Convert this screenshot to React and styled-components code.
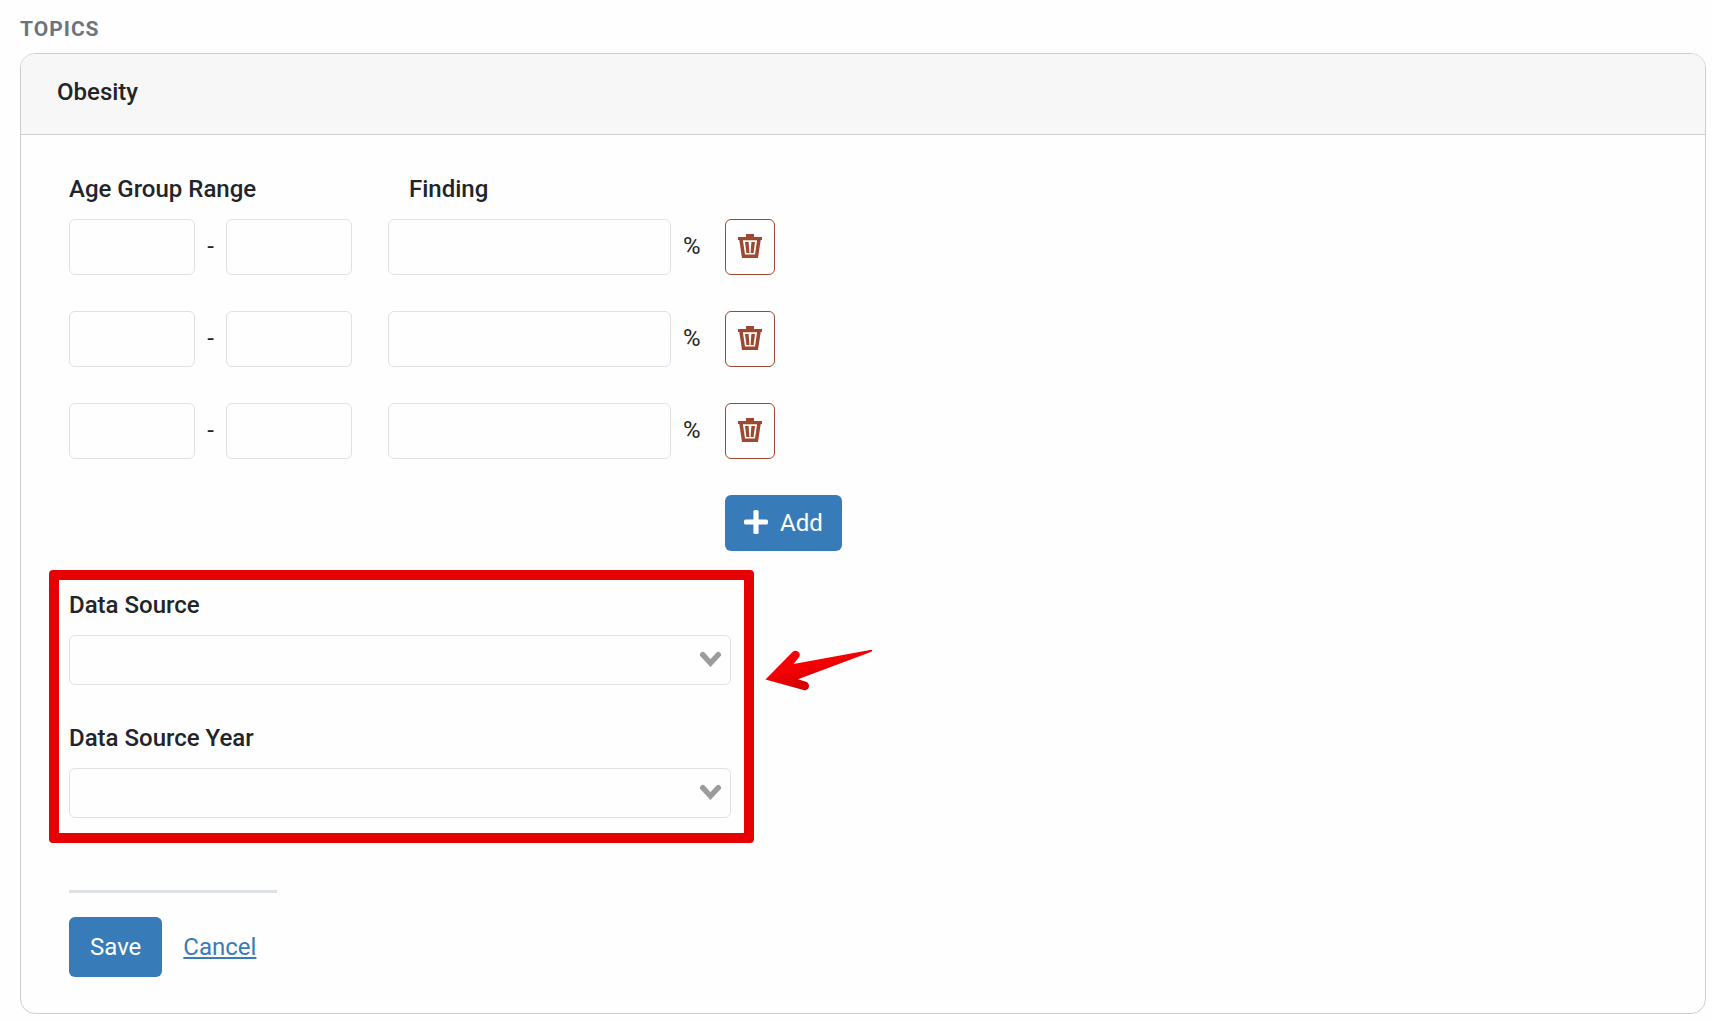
import React, { useState } from 'react';
import styled, { createGlobalStyle } from 'styled-components';

const GlobalStyle = createGlobalStyle`
    * {
        box-sizing: border-box;
    }
    body {
        margin: 0;
        background: #fefefe;
        color: #212529;
        font-family: Roboto, "Liberation Sans", sans-serif;
        font-size: 24px;
        line-height: 32px;
    }
    input, select, button {
        font: inherit;
    }
`

const Page = styled.main`
    padding: 16px 6px 6px 20px;
`

const Title = styled.h1`
    margin: 0 0 11px;
    color: #6c757d;
    font-size: 21px;
    font-weight: 700;
    line-height: 26px;
    letter-spacing: 1px;
    text-transform: uppercase;
`

const Card = styled.section`
    border: 1px solid #cccdce;
    border-radius: 15px;
    overflow: hidden;
`

const CardHeader = styled.header`
    padding: 22px 36px 26px;
    background: #f7f7f7;
    border-bottom: 1px solid #cccdce;
`

const CardTitle = styled.h2`
    margin: 0;
    font-size: 24px;
    font-weight: 500;
`

const CardBody = styled.form`
    padding: 38px 48px 36px;
`

const Findings = styled.div`
    display: grid;
    grid-template-columns: 126px 31px 126px 36px minmax(80px, 283px) 54px auto;
    justify-content: start;
    align-items: center;
    row-gap: 36px;
`

const Heading = styled.div`
    grid-column: ${({ $column }) => $column};
    margin-bottom: -22px;
    padding-left: ${({ $indent }) => ($indent ? '21px' : '0')};
    font-weight: 500;
`

const Input = styled.input`
    grid-column: ${({ $column }) => $column};
    width: 100%;
    height: 56px;
    padding: 0 12px;
    background: #fefefe;
    border: 1px solid #dee2e6;
    border-radius: 6px;
`

const Dash = styled.span`
    padding-bottom: 2px;
    text-align: center;
`

const Percent = styled.span`
    padding: 0 0 2px 12px;
`

const Button = styled.button`
    display: inline-flex;
    align-items: center;
    justify-content: center;
    gap: 12px;
    height: ${({ $tall }) => ($tall ? '60px' : '56px')};
    padding: 0 ${({ $tall }) => ($tall ? '21px' : '19px')};
    background: #387bb9;
    color: #fff;
    border: 0;
    border-radius: 6px;
    cursor: pointer;
`

const AddButton = styled(Button)`
    grid-column: 7;
`

const DeleteButton = styled.button`
    display: flex;
    align-items: center;
    justify-content: center;
    width: 50px;
    height: 56px;
    padding: 0 0 2px;
    background: #fefefe;
    color: #9d482f;
    border: 1px solid #9d482f;
    border-radius: 6px;
    cursor: pointer;
`

const Highlight = styled.div`
    position: relative;
    display: flex;
    flex-direction: column;
    gap: 37px;
    max-width: 705px;
    margin: 19px 0 47px -20px;
    padding: 9px 13px 15px 10px;
    border: 10px solid #e60202;
    border-radius: 4px;
`

const Arrow = styled.svg`
    position: absolute;
    top: 68px;
    left: 100%;
    margin-left: 20px;
`

const Label = styled.label`
    display: block;
    margin-bottom: 14px;
    font-weight: 500;
`

const SelectWrap = styled.div`
    position: relative;
    display: flex;
`

const Select = styled.select`
    appearance: none;
    width: 100%;
    height: 50px;
    padding: 0 44px 0 12px;
    background: #fefefe;
    color: inherit;
    border: 1px solid #dee2e6;
    border-radius: 6px;
`

const Chevron = styled.svg`
    position: absolute;
    top: 16px;
    right: 9px;
    pointer-events: none;
`

const Rule = styled.hr`
    width: 208px;
    height: 3px;
    margin: 0 0 24px;
    background: #dee2e6;
    border: 0;
`

const Actions = styled.div`
    display: flex;
    align-items: center;
    gap: 21px;
`

const CancelLink = styled.a`
    color: #387bb9;
    text-decoration: underline;
`

const TrashIcon = () => (
    <svg width="24" height="24" viewBox="0 0 24 24" fill="currentColor" aria-hidden="true">
        <path d="M8 0h8v3h8v3h-1.3L20 24H4L1.3 6H0V3h8z M4.9 6.3L7 20.6h10L19.1 6.3z" fillRule="evenodd" />
        <path d="M7 8h3.6l.8 11H8.4z M17 8h-3.6l-.8 11h3z" />
    </svg>
)

const PlusIcon = () => (
    <svg width="24" height="26" viewBox="0 0 24 26" fill="currentColor" aria-hidden="true">
        <rect x="9.4" y="0" width="5.2" height="24" rx="1.6" />
        <rect x="0" y="9.4" width="24" height="5.2" rx="1.6" />
    </svg>
)

function SelectField({ id, label }) {
    return (
        <div>
            <Label htmlFor={id}>{label}</Label>
            <SelectWrap>
                <Select id={id} defaultValue="">
                    <option value=""></option>
                </Select>
                <Chevron width="23" height="18" viewBox="0 0 23 18" fill="none" aria-hidden="true">
                    <path d="M3.7 3.7L11.5 12L19.3 3.7" stroke="#9b9b9b" strokeWidth="5.4" strokeLinecap="round" />
                </Chevron>
            </SelectWrap>
        </div>
    )
}

function FindingRow({ number, onDelete }) {
    return (
        <>
            <Input $column="1" type="text" aria-label={`Age from, row ${number}`} />
            <Dash>-</Dash>
            <Input $column="3" type="text" aria-label={`Age to, row ${number}`} />
            <Input $column="5" type="text" aria-label={`Finding, row ${number}`} />
            <Percent>%</Percent>
            <DeleteButton type="button" aria-label={`Delete row ${number}`} onClick={onDelete}>
                <TrashIcon />
            </DeleteButton>
        </>
    )
}

function App() {
    const [rows, setRows] = useState([1, 2, 3]);

    const addRow = () => setRows([...rows, Math.max(0, ...rows) + 1]);
    const deleteRow = (row) => setRows(rows.filter((item) => item !== row));

    return (
        <>
            <GlobalStyle />
            <Page>
                <Title>Topics</Title>
                <Card>
                    <CardHeader>
                        <CardTitle>Obesity</CardTitle>
                    </CardHeader>
                    <CardBody onSubmit={(e) => e.preventDefault()}>
                        <Findings>
                            <Heading $column="1 / 4">Age Group Range</Heading>
                            <Heading $column="5 / 8" $indent>Finding</Heading>
                            {rows.map((row) => (
                                <FindingRow key={row} number={row} onDelete={() => deleteRow(row)} />
                            ))}
                            <AddButton type="button" onClick={addRow}>
                                <PlusIcon /> Add
                            </AddButton>
                        </Findings>
                        <Highlight>
                            <SelectField id="data-source" label="Data Source" />
                            <SelectField id="data-source-year" label="Data Source Year" />
                            <Arrow width="110" height="44" viewBox="0 0 110 44" aria-hidden="true">
                                <defs>
                                    <linearGradient id="arrow-fill" gradientUnits="userSpaceOnUse" x1="44" y1="12" x2="50" y2="34">
                                        <stop offset="0.25" stopColor="#f50004" />
                                        <stop offset="0.8" stopColor="#d80000" />
                                    </linearGradient>
                                </defs>
                                <path
                                    d="M1.5 31.5L28.8 3.8A4.2 4.2 0 0 1 34.8 9.6L29.5 16L107.5 1.8Q109 2.4 107.5 3.8L34 31.2L42 33.8A4.2 4.2 0 0 1 39.5 42Z"
                                    fill="url(#arrow-fill)"
                                />
                            </Arrow>
                        </Highlight>
                        <Rule />
                        <Actions>
                            <Button type="submit" $tall>Save</Button>
                            <CancelLink href="#cancel">Cancel</CancelLink>
                        </Actions>
                    </CardBody>
                </Card>
            </Page>
        </>
    );
}

export default App;
